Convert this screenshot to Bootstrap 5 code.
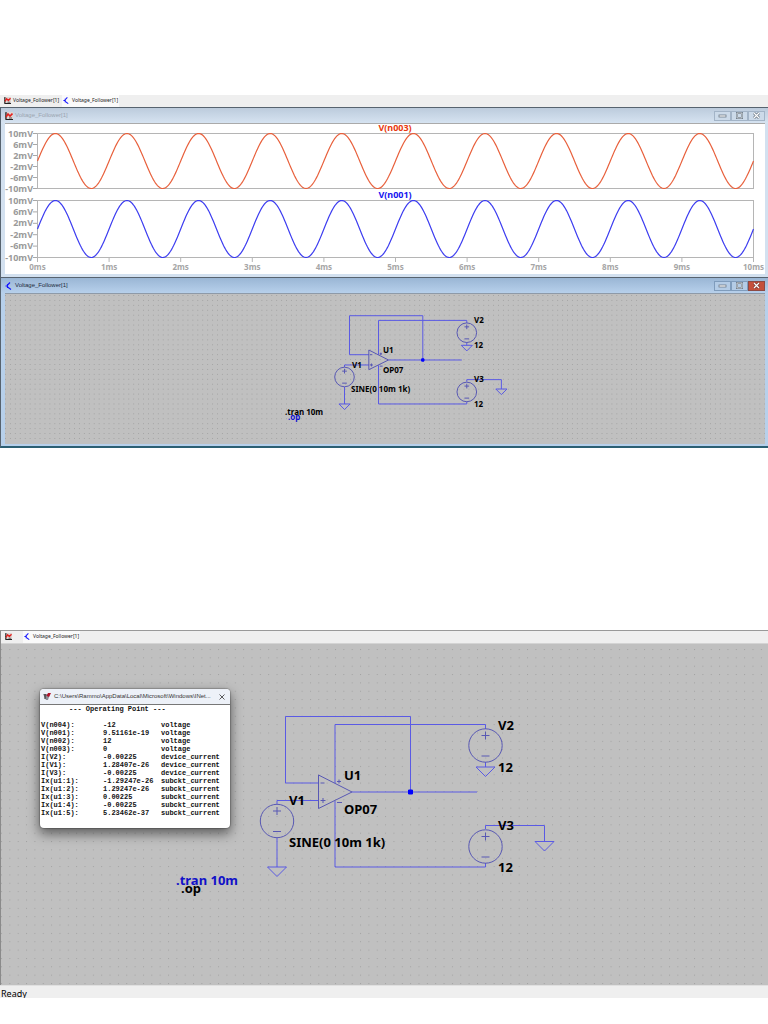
<!DOCTYPE html>
<html lang="en">
<head>
<meta charset="utf-8">
<meta name="viewport" content="width=device-width, initial-scale=1">
<title>Voltage_Follower[1]</title>
<link href="https://cdn.jsdelivr.net/npm/bootstrap@5.3.0/dist/css/bootstrap.min.css" rel="stylesheet">
<style>
body{background:#fff;color:#000;font-family:"Liberation Sans",sans-serif}
svg{display:block}
button{border:0;background:none;padding:0;color:inherit}
.shot-a{padding-top:95px}
.shot-b{margin-top:182px;border-top:1px solid #999;border-left:1px solid #8a8a8a}
.tabs{height:12px;background:#efefef;padding-left:3px;gap:2px}
.tab-btn{height:12px;font:5px/10px "Noto Sans",sans-serif;color:#222;gap:2px;padding:0 1px 2px}
.tab-btn.on{background:#fafafa}
.mdi{border:solid #57636f;border-width:1px 0 0 1px;padding:0 3px 3px 4px;background:#d3e1f0}
.mdi.live{background:#b7d0eb}
.mdi.last{border-bottom:2px solid #2c5f73;padding-bottom:2px}
.bar{height:15px;margin:0 -3px 0 -4px;padding:0 3px 0 4px;background:linear-gradient(#bccbdc,#d6e3f1);font-size:6px;line-height:15px;color:#9aa5b1;gap:2px}
.live .bar{background:linear-gradient(#9ab6d5,#b7d0eb);color:#1c2b3c}
.ctl{width:17px;height:10px;border:1px solid #a3b4c7;background:#ccdae9;display:flex;align-items:center;justify-content:center}
.live .ctl{border-color:#7f9cbc;background:#b4cce6}
.live .ctl.shut{background:#c5503c;border-color:#8d4a44}
.canvas-svg{width:100%;height:auto}
.plot{background:#fff}
.axis{font:bold 9px "Noto Sans",sans-serif;fill:#9a9a9a}
.ticks{font:bold 8px "Noto Sans",sans-serif;fill:#a6a6a6}
.net{font:bold 9px "Noto Sans",sans-serif}
.wire{fill:none;stroke:#5a5ae4;stroke-width:1}
#follower *,#src *,#gnd *{vector-effect:non-scaling-stroke}
.part{stroke:#5858b4}
.sm{font:bold 8px "Noto Sans",sans-serif}
.lg{font:bold 13px "Noto Sans",sans-serif}
.stage{position:relative;border-top:1px solid #d4d4d4}
.log{position:absolute;left:39px;top:45px;width:190px;height:139px;background:#fff;border-radius:4px;box-shadow:0 5px 12px 1px rgba(0,0,0,.5),0 0 1px 1px rgba(0,0,0,.2)}
.log-bar{height:16px;background:#edf1f8;border-radius:4px 4px 0 0;font-size:6px;color:#333;padding:0 5px 0 3px;border-bottom:1px solid #777;gap:3px}
.log-text{font:bold 7px/8px "Liberation Mono",monospace;color:#111;padding-left:1px}
.log-text h2{font:inherit;margin:0 0 8px 28px}
.log-text table{width:100%;table-layout:fixed}
.log-text td{padding:0;white-space:pre}
.c1{width:62px}.c2{width:58px}
.status{height:13px;margin-left:-1px;border-top:1px solid #e0e0e0;background:#efefef;font:9px/16px "Noto Sans",sans-serif;padding-left:1px}
</style>
</head>
<body>
<svg width="0" height="0" class="position-absolute" aria-hidden="true">
<defs>
<g id="wave-icon"><rect x="0" y="0" width="8" height="8" fill="#ded5d2"/><path d="M1 0V7.500H8" stroke="#222" fill="none" stroke-width="1.200"/><path d="M1 5l2-3 2 2 2.500-2.500" stroke="#e3221f" stroke-width="1.600" fill="none"/><path d="M0 2h1M0 4h1M0 6h1M4 6h3" stroke="#333" stroke-width=".8"/></g>
<g id="sch-icon"><path d="M5 0.500 2.500 3v2L6 7.500M0.500 4h2M2.500 2v4" stroke="#1414ff" stroke-width="1.200" fill="none"/></g>
<g id="src"><circle r="16.700"/><path d="M0-14v8M-4-10h8M-4 10.500h8"/></g>
<g id="gnd"><path d="M-9.500 0h19L0 9.500z"/></g>
<g id="follower">
<path d="M319 783H285.500V716.500H410.500V792M335 783V724.500H485.500V729M352 792H477M277 804V800.500H319M335 801V867H485.500V863M485.500 829V825.500H544.500V841.500M277 838V867M485.500 762V767"/>
<g class="part"><path d="M318.500 775V808.500L352 792zM320.500 783h4M320.500 800.500h5M323 798v5M337 781.500h4M339 779.500v4M337 802.500h5"/>
<use href="#src" x="277" y="821"/><use href="#src" x="485.500" y="745.500"/><use href="#src" x="485.500" y="846.500"/></g>
<use href="#gnd" x="277" y="867"/><use href="#gnd" x="485.500" y="767"/><use href="#gnd" x="544.500" y="841.500"/>
<rect x="408.500" y="790" width="4" height="4" fill="#00f" stroke="#00f"/>
</g>
<pattern id="dots-s" width="4.930" height="4.930" x="5" y="295" patternUnits="userSpaceOnUse"><rect width="1" height="1" fill="#a4a4a4"/></pattern>
<pattern id="dots-l" width="8.350" height="8.350" x="1" y="649" patternUnits="userSpaceOnUse"><rect width="1" height="1" fill="#a2a2a2"/></pattern>
</defs>
</svg>

<main>
<section class="shot-a">
  <div class="tabs d-flex">
    <button class="tab-btn d-flex align-items-center"><svg width="7" height="7" viewBox="0 0 8 8"><use href="#wave-icon"/></svg>Voltage_Follower[1]</button>
    <button class="tab-btn on d-flex align-items-center"><svg width="7" height="7" viewBox="0 0 8 8"><use href="#sch-icon"/></svg>Voltage_Follower[1]</button>
  </div>
  <div class="mdi">
    <div class="bar d-flex align-items-center"><svg width="8" height="8" viewBox="0 0 8 8"><use href="#wave-icon"/></svg><span class="me-auto">Voltage_Follower[1]</span>
      <div class="d-flex">
        <button class="ctl" aria-label="Minimize"><svg width="9" height="7"><rect x="1" y="3" width="7" height="2" fill="#fff" stroke="#6b7885" stroke-width=".8"/></svg></button>
        <button class="ctl" aria-label="Maximize"><svg width="9" height="7"><path d="M2 1h5v5H2z" fill="none" stroke="#6b7885" stroke-width="1.800"/><path d="M2 1h5v5H2z" fill="none" stroke="#fff" stroke-width=".6"/></svg></button>
        <button class="ctl" aria-label="Close"><svg width="9" height="7"><path d="M2 1l5 5M7 1L2 6" stroke="#66727f" stroke-width="2.600"/><path d="M2 1l5 5M7 1L2 6" stroke="#fff" stroke-width="1.200"/></svg></button>
      </div>
    </div>
    <svg class="canvas-svg plot" viewBox="5 123 760 151" id="plot">
      <path d="M5 123.500H765" stroke="#aaa"/>
      <g fill="none" stroke="#b5b5b5"><rect x="37.500" y="133.500" width="716" height="55"/><rect x="37.500" y="200.500" width="716" height="57"/></g>
      <text class="net" x="395" y="131" text-anchor="middle" fill="#e8380d">V(n003)</text>
      <text class="net" x="395" y="198" text-anchor="middle" fill="#1414f0">V(n001)</text>
    </svg>
  </div>
  <div class="mdi live last">
    <div class="bar d-flex align-items-center"><svg width="8" height="8" viewBox="0 0 8 8"><use href="#sch-icon"/></svg><span class="me-auto">Voltage_Follower[1]</span>
      <div class="d-flex">
        <button class="ctl" aria-label="Minimize"><svg width="9" height="7"><rect x="1" y="3" width="7" height="2" fill="#fff" stroke="#6b7885" stroke-width=".8"/></svg></button>
        <button class="ctl" aria-label="Maximize"><svg width="9" height="7"><path d="M2 1h5v5H2z" fill="none" stroke="#6b7885" stroke-width="1.800"/><path d="M2 1h5v5H2z" fill="none" stroke="#fff" stroke-width=".6"/></svg></button>
        <button class="ctl shut" aria-label="Close"><svg width="9" height="7"><path d="M2 1l5 5M7 1L2 6" stroke="#743732" stroke-width="2.600"/><path d="M2 1l5 5M7 1L2 6" stroke="#fff" stroke-width="1.200"/></svg></button>
      </div>
    </div>
    <svg class="canvas-svg" viewBox="5 293 760 151">
      <rect x="5" y="293" width="760" height="151" fill="#c0c0c0"/><rect x="5" y="293" width="760" height="148" fill="url(#dots-s)"/>
      <path d="M5 293.500H765" stroke="#8e9aa8"/>
      <g class="wire" transform="translate(182.040 -104.520) scale(.5865)"><use href="#follower"/></g>
      <g class="sm">
        <text x="352" y="368">V1</text><text x="383" y="353">U1</text><text x="383" y="373">OP07</text>
        <text x="474" y="323">V2</text><text x="474" y="348">12</text><text x="474" y="382">V3</text><text x="474" y="407">12</text>
        <text x="351" y="392">SINE(0 10m 1k)</text><text x="285" y="415">.tran 10m</text><text x="288" y="420" fill="#1010d0">.op</text>
      </g>
    </svg>
  </div>
</section>

<section class="shot-b">
  <div class="tabs d-flex">
    <button class="tab-btn d-flex align-items-center me-2" aria-label="Waveform"><svg width="7" height="7" viewBox="0 0 8 8"><use href="#wave-icon"/></svg></button>
    <button class="tab-btn on d-flex align-items-center"><svg width="7" height="7" viewBox="0 0 8 8"><use href="#sch-icon"/></svg>Voltage_Follower[1]</button>
  </div>
  <div class="stage">
    <svg class="canvas-svg" viewBox="1 644 767 341">
      <rect x="1" y="644" width="767" height="341" fill="#c0c0c0"/><rect x="1" y="644" width="767" height="341" fill="url(#dots-l)"/>
      <g class="wire"><use href="#follower"/></g>
      <g class="lg">
        <text x="289" y="805">V1</text><text x="344" y="780">U1</text><text x="344" y="814">OP07</text>
        <text x="498" y="730">V2</text><text x="498" y="772">12</text><text x="498" y="830">V3</text><text x="498" y="872">12</text>
        <text x="289" y="847">SINE(0 10m 1k)</text><text x="176" y="885" fill="#1010c8">.tran 10m</text><text x="181" y="893">.op</text>
      </g>
    </svg>
    <div class="log">
      <div class="log-bar d-flex align-items-center"><svg width="8" height="8" viewBox="0 0 8 8"><path d="M0 1h7L5 7H3z" fill="#8d8d96"/><path d="M2 1l1.500 2L5 0h3L6 4 4 3z" fill="#b3122a"/><path d="M2 1v5" stroke="#222"/></svg><span class="me-auto text-nowrap">C:\Users\Rammo\AppData\Local\Microsoft\Windows\INet...</span>
        <button aria-label="Close"><svg width="6" height="6"><path d="M.5.5l5 5M5.500.5l-5 5" stroke="#333" stroke-width=".8"/></svg></button></div>
      <div class="log-text">
        <h2>--- Operating Point ---</h2>
        <table>
          <colgroup><col class="c1"><col class="c2"><col></colgroup>
          <tbody>
          <tr><td>V(n004):</td><td>-12</td><td>voltage</td></tr>
          <tr><td>V(n001):</td><td>9.51161e-19</td><td>voltage</td></tr>
          <tr><td>V(n002):</td><td>12</td><td>voltage</td></tr>
          <tr><td>V(n003):</td><td>0</td><td>voltage</td></tr>
          <tr><td>I(V2):</td><td>-0.00225</td><td>device_current</td></tr>
          <tr><td>I(V1):</td><td>1.28407e-26</td><td>device_current</td></tr>
          <tr><td>I(V3):</td><td>-0.00225</td><td>device_current</td></tr>
          <tr><td>Ix(u1:1):</td><td>-1.29247e-26</td><td>subckt_current</td></tr>
          <tr><td>Ix(u1:2):</td><td>1.29247e-26</td><td>subckt_current</td></tr>
          <tr><td>Ix(u1:3):</td><td>0.00225</td><td>subckt_current</td></tr>
          <tr><td>Ix(u1:4):</td><td>-0.00225</td><td>subckt_current</td></tr>
          <tr><td>Ix(u1:5):</td><td>5.23462e-37</td><td>subckt_current</td></tr>
          </tbody>
        </table>
      </div>
    </div>
  </div>
  <div class="status">Ready</div>
</section>
</main>
<script src="https://cdn.jsdelivr.net/npm/bootstrap@5.3.0/dist/js/bootstrap.bundle.min.js"></script>
<script>
const plot = document.getElementById('plot');
function add(tag, attrs, text) {
  const el = document.createElementNS('http://www.w3.org/2000/svg', tag);
  for (const k in attrs) el.setAttribute(k, attrs[k]);
  if (text) el.textContent = text;
  plot.appendChild(el);
}
// Two 1 kHz traces over 10 ms, each with its own voltage axis
[[133.5, 188.5, '#e8603c'], [200.5, 257.5, '#3c3cf0']].forEach(([top, bottom, color]) => {
  ['10mV', '6mV', '2mV', '-2mV', '-6mV', '-10mV'].forEach((label, i) => {
    const y = top + (bottom - top) * i / 5;
    add('path', {d: `M33 ${y}H37`, stroke: '#a8a8a8'});
    add('text', {class: 'axis', x: 33, y: Math.round(y + 3), 'text-anchor': 'end'}, label);
  });
  const mid = (top + bottom) / 2, amp = (bottom - top) / 2;
  let d = '';
  for (let x = 0; x <= 716; x++) {
    d += (x ? 'L' : 'M') + (37.5 + x) + ' ' + (mid - amp * Math.sin(x / 71.6 * 2 * Math.PI)).toFixed(2);
  }
  add('path', {d, fill: 'none', stroke: color, 'stroke-width': 1.2});
});
for (let ms = 0; ms <= 10; ms++) {
  const x = 37.5 + ms * 71.6;
  add('path', {d: `M${x} 258V262`, stroke: '#b5b5b5'});
  add('text', {class: 'ticks', x, y: 270, 'text-anchor': 'middle'}, ms + 'ms');
}
</script>
</body>
</html>
